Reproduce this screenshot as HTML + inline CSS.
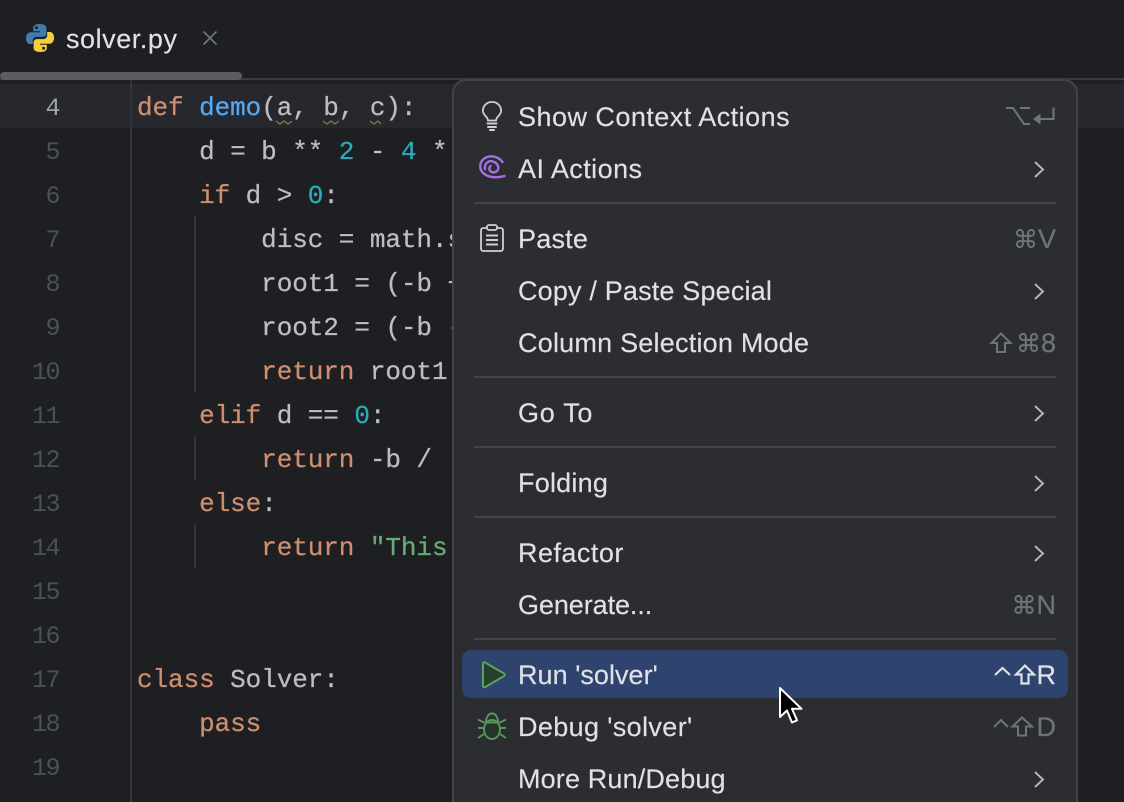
<!DOCTYPE html>
<html><head><meta charset="utf-8"><style>
html,body{margin:0;padding:0;background:#1e1f22}
#r{position:relative;width:1124px;height:802px;overflow:hidden;background:#1e1f22;font-family:"Liberation Sans",sans-serif}
.a{position:absolute}
.c{position:absolute;left:137px;height:44px;margin-top:1px;font:26px/44px "Liberation Mono",monospace;letter-spacing:-.08px;-webkit-text-stroke:.25px;color:#bcbec4;white-space:pre}
.n{position:absolute;left:0;width:59px;margin-top:2px;text-align:right;font:25px/44px "Liberation Mono",monospace;color:#4b5059;letter-spacing:-1.5px}
.k{color:#cf8e6d}.f{color:#56a8f5}.u{color:#2aacb8}.s{color:#6aab73}
.g{position:absolute;left:194px;width:2px;background:#313438}
.m{position:absolute;left:518px;font-size:27px;line-height:40px;height:40px;color:#dfe1e5;white-space:pre;letter-spacing:.22px;-webkit-text-stroke:.15px}
.sep{position:absolute;left:474px;width:582px;height:2px;background:#43454a}
.sc{position:absolute;right:68px;font:27px/40px "Liberation Sans","DejaVu Sans",sans-serif;color:#6f737a;white-space:pre;-webkit-text-stroke:.2px}
.cmd{font-family:"DejaVu Sans",sans-serif;font-size:25px}
svg{position:absolute;overflow:visible}
</style></head><body><div id="r">

<svg style="left:26px;top:24px" width="28" height="28" viewBox="0 0 28 28">
<path id="p" fill="#3f7cad" d="M13.6 0C8.8 0 7.2 1.7 7.2 4V7.2H14V8.2H4.8C1.8 8.2 0 10.6 0 14.2 0 17.8 1.6 20 4.2 20H6.8V16.6C6.800 14.400 8.600 12.900 10.800 12.900H16.800C18.700 12.900 20.400 11.600 20.400 9.400V4C20.400 1.600 18 0 13.600 0Z"/>
<circle cx="10.4" cy="3.7" r="1.5" fill="#1e1f22"/>
<g transform="rotate(180 14 14)"><path fill="#f7cf3d" d="M13.6 0C8.8 0 7.2 1.7 7.2 4V7.2H14V8.2H4.8C1.8 8.2 0 10.6 0 14.2 0 17.8 1.6 20 4.2 20H6.8V16.6C6.800 14.400 8.600 12.900 10.800 12.900H16.800C18.700 12.900 20.400 11.600 20.400 9.400V4C20.400 1.600 18 0 13.600 0Z"/><circle cx="10.4" cy="3.7" r="1.5" fill="#1e1f22"/></g>
</svg>
<div class="a" style="left:66px;top:19px;font-size:27px;line-height:40px;color:#dfe1e5;letter-spacing:.55px;-webkit-text-stroke:.15px">solver.py</div>
<svg style="left:203px;top:31px" width="14" height="14" viewBox="0 0 14 14"><path d="M.5.5l13 13M13.5.5l-13 13" stroke="#6f737a" stroke-width="1.7" fill="none"/></svg>

<div class="a" style="left:0;top:78px;width:1124px;height:2px;background:#393b40"></div>
<div class="a" style="left:0;top:72px;width:242px;height:8px;border-radius:4px;background:#5a5c60"></div>
<div class="a" style="left:0;top:84px;width:1124px;height:44px;background:#26282e"></div>
<div class="a" style="left:130px;top:80px;width:2px;height:722px;background:#313438"></div>

<div class="g" style="top:216px;height:176px"></div>
<div class="g" style="top:436px;height:44px"></div>
<div class="g" style="top:524px;height:44px"></div>

<div class="n" style="top:85px;color:#a1a3ab">4</div>
<div class="n" style="top:129px">5</div>
<div class="n" style="top:173px">6</div>
<div class="n" style="top:217px">7</div>
<div class="n" style="top:261px">8</div>
<div class="n" style="top:305px">9</div>
<div class="n" style="top:349px">10</div>
<div class="n" style="top:393px">11</div>
<div class="n" style="top:437px">12</div>
<div class="n" style="top:481px">13</div>
<div class="n" style="top:525px">14</div>
<div class="n" style="top:569px">15</div>
<div class="n" style="top:613px">16</div>
<div class="n" style="top:657px">17</div>
<div class="n" style="top:701px">18</div>
<div class="n" style="top:745px">19</div>

<div class="c" style="top:85px"><span class="k">def</span> <span class="f">demo</span>(a, b, c):</div>
<svg style="left:276px;top:119px" width="100" height="6" viewBox="0 0 100 6" fill="none" stroke="#8a7434" stroke-width="1.4"><path d="M0 2l4 3 4-3 4 3 4-3M47 2l4 3 4-3 4 3 4-3M94 2l4 3 4-3 3 3"/></svg>
<div class="c" style="top:129px">    d = b ** <span class="u">2</span> - <span class="u">4</span> *</div>
<div class="c" style="top:173px">    <span class="k">if</span> d &gt; <span class="u">0</span>:</div>
<div class="c" style="top:217px">        disc = math.s</div>
<div class="c" style="top:261px">        root1 = (-b +</div>
<div class="c" style="top:305px">        root2 = (-b -</div>
<div class="c" style="top:349px">        <span class="k">return</span> root1</div>
<div class="c" style="top:393px">    <span class="k">elif</span> d == <span class="u">0</span>:</div>
<div class="c" style="top:437px">        <span class="k">return</span> -b /</div>
<div class="c" style="top:481px">    <span class="k">else</span>:</div>
<div class="c" style="top:525px">        <span class="k">return</span> <span class="s">"This</span></div>
<div class="c" style="top:657px"><span class="k">class</span> Solver:</div>
<div class="c" style="top:701px">    <span class="k">pass</span></div>

<div class="a" style="left:452px;top:79px;width:626px;height:740px;box-sizing:border-box;border:2px solid #404247;border-radius:14px;background:#2b2d30"></div>

<div class="sep" style="top:202px"></div>
<div class="sep" style="top:376px"></div>
<div class="sep" style="top:446px"></div>
<div class="sep" style="top:516px"></div>
<div class="sep" style="top:638px"></div>
<div class="a" style="left:462px;top:650px;width:606px;height:48px;border-radius:9px;background:#2e436e"></div>

<div class="m" style="top:97px;letter-spacing:.47px">Show Context Actions</div>
<div class="m" style="top:149px;letter-spacing:.44px">AI Actions</div>
<div class="m" style="top:219px">Paste</div>
<div class="m" style="top:271px;letter-spacing:.17px">Copy / Paste Special</div>
<div class="m" style="top:323px">Column Selection Mode</div>
<div class="m" style="top:393px;letter-spacing:.72px">Go To</div>
<div class="m" style="top:463px">Folding</div>
<div class="m" style="top:533px;letter-spacing:.47px">Refactor</div>
<div class="m" style="top:585px;letter-spacing:-.08px">Generate...</div>
<div class="m" style="top:655px;letter-spacing:.04px">Run 'solver'</div>
<div class="m" style="top:707px;letter-spacing:.37px">Debug 'solver'</div>
<div class="m" style="top:759px;letter-spacing:.15px">More Run/Debug</div>

<svg style="left:482px;top:101px" width="20" height="30" viewBox="0 0 20 30" fill="none" stroke="#ced0d6" stroke-width="1.8"><path d="M6 19.5C6 15.5 .9 14.500 .9 9.800 .9 4.500 5 1 10 1s9.100 3.500 9.100 8.800c0 4.700-5.100 5.700-5.100 9.700z"/><path d="M5.500 22.500h9M6 26h8M8 29h4" stroke-linecap="round" stroke-width="2"/></svg>
<svg style="left:479px;top:155px" width="27" height="26" viewBox="0 0 27 26" fill="none" stroke="#a571e6" stroke-width="2.4" stroke-linecap="round"><path d="M23.500 7C19.500 1.800 12.500 .2 7.500 2.200 2 4.500 0 10 2 15 5 21.500 15 24 25.500 21"/><path d="M6 14C5 8.500 10 5 14 6.500 20 8.500 21 15 16.500 17 12 18.500 8.500 14.500 11.500 11"/></svg>
<svg style="left:480px;top:224px" width="24" height="28" viewBox="0 0 24 28" fill="none" stroke="#ced0d6" stroke-width="1.8"><path d="M7 4H3.500C2 4 1 5 1 6.500v18C1 26 2 27 3.500 27h17c1.500 0 2.500-1 2.500-2.500v-18C23 5 22 4 20.500 4H17"/><rect x="7" y="1" width="10" height="5" rx="2"/><path d="M6 11.500h12M6 16h12M6 20.500h12" stroke-width="2"/></svg>
<svg style="left:481px;top:661px" width="25" height="28" viewBox="0 0 25 28"><path d="M2 2.500C2 1.500 3 1 4 1.500l19 11c1 .6 1 2 0 2.600l-19 11c-1 .5-2 0-2-1z" fill="#273f2f" stroke="#57a45b" stroke-width="2" stroke-linejoin="round"/></svg>
<svg style="left:477px;top:712px" width="30" height="28" viewBox="0 0 30 28" fill="none" stroke="#57965c" stroke-width="1.9"><path d="M9 10.500C9 4.500 12 1.500 15 1.500s6 3 6 9" fill="#253627"/><ellipse cx="15" cy="17.500" rx="8" ry="9.500" fill="#253627"/><path d="M8.500 10.500h13M1 16h6M23 16h6M1 7.500l7 3.500M29 7.500l-7 3.500M1 26l6-4M29 26l-6-4"/></svg>

<svg style="left:1034px;top:161px" width="10" height="17" viewBox="0 0 10 17" fill="none" stroke="#b4b8bf" stroke-width="1.900"><path d="M1 1l8 7.500-8 7.500"/></svg>
<svg style="left:1034px;top:283px" width="10" height="17" viewBox="0 0 10 17" fill="none" stroke="#b4b8bf" stroke-width="1.900"><path d="M1 1l8 7.500-8 7.500"/></svg>
<svg style="left:1034px;top:405px" width="10" height="17" viewBox="0 0 10 17" fill="none" stroke="#b4b8bf" stroke-width="1.900"><path d="M1 1l8 7.500-8 7.500"/></svg>
<svg style="left:1034px;top:475px" width="10" height="17" viewBox="0 0 10 17" fill="none" stroke="#b4b8bf" stroke-width="1.900"><path d="M1 1l8 7.500-8 7.500"/></svg>
<svg style="left:1034px;top:545px" width="10" height="17" viewBox="0 0 10 17" fill="none" stroke="#b4b8bf" stroke-width="1.900"><path d="M1 1l8 7.500-8 7.500"/></svg>
<svg style="left:1034px;top:771px" width="10" height="17" viewBox="0 0 10 17" fill="none" stroke="#b4b8bf" stroke-width="1.900"><path d="M1 1l8 7.500-8 7.500"/></svg>

<svg style="left:1006px;top:106px" width="50" height="20" viewBox="0 0 50 20" fill="none" stroke="#6f737a" stroke-width="2.1"><path d="M0 2h7l11 16h6M14 2h10M47.500 1.500v11.500H30"/><path d="M27 13l7.500-5.500v11z" fill="#6f737a" stroke="none"/></svg>
<div class="sc" style="top:219px"><span class="cmd">⌘</span>V</div>
<div class="sc" style="top:323px"><span class="cmd">⌘</span>8</div>
<svg style="left:990px;top:332px" width="22" height="21" viewBox="0 0 22 21" fill="none" stroke="#6f737a" stroke-width="2"><path d="M11 1.500L1.500 11H7v9h8v-9h5.500z"/></svg>
<div class="sc" style="top:585px"><span class="cmd">⌘</span>N</div>
<div class="sc" style="top:655px;color:#dfe1e5">R</div>
<svg style="left:994px;top:664px" width="42" height="22" viewBox="0 0 42 22" fill="none" stroke="#dfe1e5" stroke-width="2.200"><path d="M1 11l7.500-7 7.500 7M31 1.500L22 10.500h5.500v9h7v-9H40z"/></svg>
<div class="sc" style="top:707px">D</div>
<svg style="left:993px;top:716px" width="42" height="22" viewBox="0 0 42 22" fill="none" stroke="#6f737a" stroke-width="2"><path d="M1 11l7-7 7 7M29 1.500L19.500 10.500H25v9h8v-9h6z"/></svg>

<svg style="left:779px;top:687px" width="24" height="37" viewBox="0 0 24 37"><path d="M1 1v29l7-6.500 5 12 5-2.200-5-11.500h9.500z" fill="#000" stroke="#fff" stroke-width="2" stroke-linejoin="round"/></svg>
</div></body></html>
